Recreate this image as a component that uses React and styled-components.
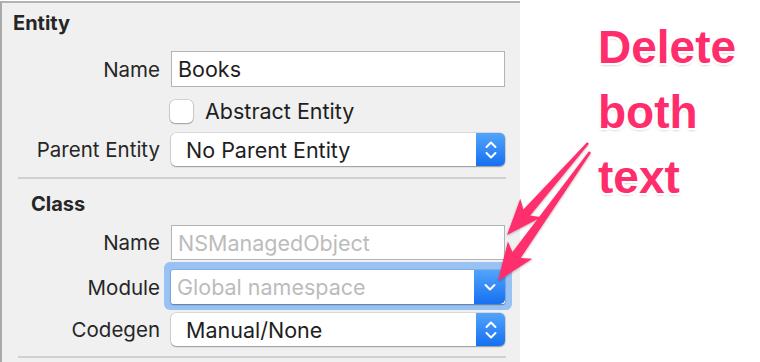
import React from "react";
import styled, { createGlobalStyle } from "styled-components";

const GlobalStyle = createGlobalStyle`
  html, body {
    margin: 0;
    padding: 0;
    background: #ffffff;
  }
  body {
    font-family: Inter, "Noto Sans", sans-serif;
    -webkit-font-smoothing: antialiased;
  }
`;

const Page = styled.div`
  position: relative;
  width: 760px;
  height: 362px;
  display: flex;
  overflow: hidden;
`;

const Panel = styled.div`
  width: 518px;
  margin-top: 1px;
  background: #f0f0f0;
  border-top: 2px solid #b3b3b3;
  border-left: 2px solid #a9a9a9;
  display: flex;
  flex-direction: column;
`;

const SectionTitle = styled.div`
  font-size: 20px;
  line-height: 24px;
  font-weight: 700;
  color: #262626;
  margin-top: ${(p) => p.$top}px;
  padding-left: ${(p) => p.$indent}px;
`;

const Row = styled.div`
  display: grid;
  grid-template-columns: 158px 334px;
  column-gap: 11px;
  align-items: center;
  height: ${(p) => p.$h}px;
  margin-top: ${(p) => p.$top}px;
`;

const Label = styled.div`
  text-align: right;
  font-size: 20.5px;
  color: #262626;
  white-space: nowrap;
`;

const TextField = styled.div`
  box-sizing: border-box;
  height: ${(p) => p.$h}px;
  background: #fff;
  border: 1px solid #b4b4b4;
  padding-left: 6px;
  display: flex;
  align-items: center;
  font-size: 21.5px;
  color: ${(p) => (p.$placeholder ? "#bcbcbc" : "#1e1e1e")};
`;

const Focus = styled.div`
  margin: -8px -7px -6px -7px;
  padding: 8px 7px 6px 7px;
  border-radius: 6px;
  background: #97c2f3;
`;

const Popup = styled.div`
  box-sizing: border-box;
  height: ${(p) => p.$h}px;
  display: flex;
  align-items: stretch;
  background: #fff;
  border-radius: ${(p) => p.$radius ?? 5}px;
  box-shadow: 0 0 0 0.5px rgba(0, 0, 0, 0.18), 0 1px 1.5px rgba(0, 0, 0, 0.3);
  font-size: 21.5px;
  color: ${(p) => (p.$placeholder ? "#bcbcbc" : "#1e1e1e")};
`;

const PopupText = styled.div`
  flex: 1;
  display: flex;
  align-items: center;
  padding-left: ${(p) => p.$pad}px;
`;

const Stepper = styled.div`
  width: ${(p) => p.$w}px;
  display: flex;
  align-items: center;
  justify-content: center;
  border-radius: 0 5px 5px 0;
  background: linear-gradient(#52a4fb, #1670f1);
`;

const CheckRow = styled.div`
  display: flex;
  align-items: center;
  gap: 12px;
  font-size: 21.5px;
  color: #1e1e1e;
`;

const Box = styled.div`
  box-sizing: border-box;
  width: 23px;
  height: 23px;
  margin-left: -1px;
  border-radius: 5px;
  background: #fff;
  box-shadow: 0 0 0 0.5px rgba(0, 0, 0, 0.25), 0 1px 1.5px rgba(0, 0, 0, 0.25);
`;

const Divider = styled.div`
  height: 2px;
  background: #d0d0d0;
  margin: ${(p) => p.$top}px 14px 0 16px;
`;

const Note = styled.div`
  padding: 15px 0 0 78px;
  font-family: "Liberation Sans", Arial, sans-serif;
  font-weight: 700;
  font-size: 46px;
  line-height: 65px;
  color: #ff2d6c;
  text-shadow: 2px 0 0 #fff, -2px 0 0 #fff, 0 2px 0 #fff, 0 -2px 0 #fff,
    1.5px 1.5px 0 #fff, -1.5px 1.5px 0 #fff, 1.5px -1.5px 0 #fff,
    -1.5px -1.5px 0 #fff, 0 2px 3px rgba(0, 0, 0, 0.3);
`;

const Overlay = styled.svg`
  position: absolute;
  left: 0;
  top: 0;
  pointer-events: none;
`;

const Chevrons = ({ up = true }) => (
  <svg width="14" height="22" viewBox="0 0 14 22">
    {up && (
      <path d="M2.5 8 L7 3.5 L11.5 8" fill="none" stroke="#fff" strokeWidth="2" strokeLinecap="round" strokeLinejoin="round" />
    )}
    <path
      d={up ? "M2.5 14 L7 18.5 L11.5 14" : "M2.5 9 L7 13.5 L11.5 9"}
      fill="none"
      stroke="#fff"
      strokeWidth="2"
      strokeLinecap="round"
      strokeLinejoin="round"
    />
  </svg>
);

function arrow(tail, tip, headLen, headHalf, tailHalf, neckHalf) {
  const dx = tip[0] - tail[0];
  const dy = tip[1] - tail[1];
  const len = Math.hypot(dx, dy);
  const u = [dx / len, dy / len];
  const n = [-u[1], u[0]];
  const base = [tip[0] - u[0] * headLen, tip[1] - u[1] * headLen];
  const back = [base[0] - u[0] * 6, base[1] - u[1] * 6];
  const pt = (p, s, k) => `${(p[0] + n[0] * s * k).toFixed(1)},${(p[1] + n[1] * s * k).toFixed(1)}`;
  return [
    pt(tail, 1, tailHalf),
    pt(base, 1, neckHalf),
    pt(back, 1, headHalf),
    `${tip[0]},${tip[1]}`,
    pt(back, -1, headHalf),
    pt(base, -1, neckHalf),
    pt(tail, -1, tailHalf),
  ].join(" ");
}

export default function App() {
  return (
    <>
      <GlobalStyle />
      <Page>
        <Panel>
          <SectionTitle $top={8} $indent={11}>Entity</SectionTitle>
          <Row $h={36} $top={16}>
            <Label>Name</Label>
            <TextField $h={36}>Books</TextField>
          </Row>
          <Row $h={23} $top={11}>
            <span />
            <CheckRow>
              <Box />
              Abstract Entity
            </CheckRow>
          </Row>
          <Row $h={33} $top={12}>
            <Label>Parent Entity</Label>
            <Popup $h={33}>
              <PopupText $pad={15}>No Parent Entity</PopupText>
              <Stepper $w={29}>
                <Chevrons />
              </Stepper>
            </Popup>
          </Row>
          <Divider $top={11} />
          <SectionTitle $top={13} $indent={29}>Class</SectionTitle>
          <Row $h={35} $top={9}>
            <Label>Name</Label>
            <TextField $h={35} $placeholder>NSManagedObject</TextField>
          </Row>
          <Row $h={34} $top={10}>
            <Label>Module</Label>
            <Focus>
              <Popup $h={34} $placeholder $radius={2}>
                <PopupText $pad={6}>Global namespace</PopupText>
                <Stepper $w={31}>
                  <Chevrons up={false} />
                </Stepper>
              </Popup>
            </Focus>
          </Row>
          <Row $h={33} $top={9}>
            <Label>Codegen</Label>
            <Popup $h={33}>
              <PopupText $pad={15}>Manual/None</PopupText>
              <Stepper $w={29}>
                <Chevrons />
              </Stepper>
            </Popup>
          </Row>
          <Divider $top={10} />
        </Panel>
        <Note>
          Delete
          <br />
          both
          <br />
          text
        </Note>
        <Overlay width="760" height="362" viewBox="0 0 760 362">
          <defs>
            <filter id="sh" x="-20%" y="-20%" width="140%" height="140%">
              <feDropShadow dx="0" dy="1" stdDeviation="1" floodColor="#000" floodOpacity="0.3" />
            </filter>
          </defs>
          <g fill="#ff2d6c" filter="url(#sh)">
            <polygon points={arrow([588, 143], [507, 235], 30, 14, 1.2, 4.5)} />
            <polygon points={arrow([590, 152], [498, 281], 32, 15, 1.2, 5)} />
          </g>
        </Overlay>
      </Page>
    </>
  );
}
